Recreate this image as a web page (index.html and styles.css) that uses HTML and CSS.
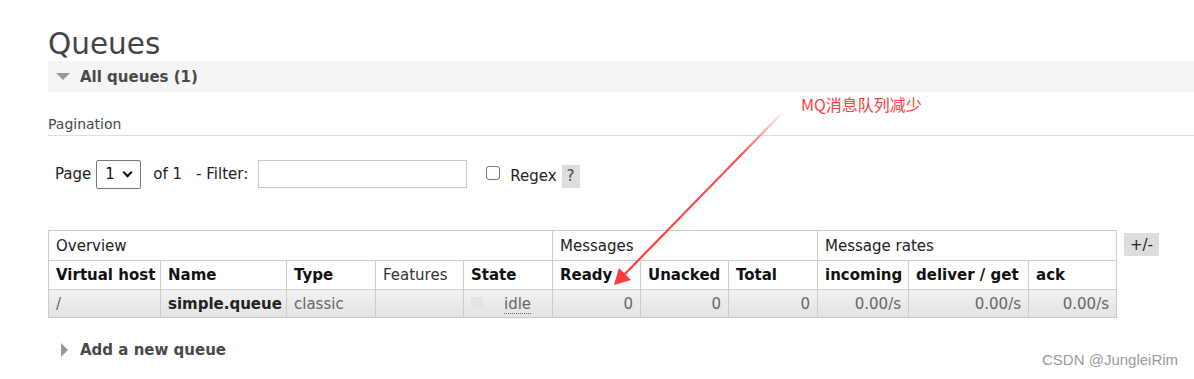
FILE: index.html
```html
<!DOCTYPE html>
<html>
<head>
    <title>Queues</title>
    <meta name="viewport" content="width=device-width, initial-scale=1.0">
    <link rel="stylesheet" href="styles.css">
</head>
<body>
    <div class="main">
        <h1>Queues</h1>

        <div class="section">
            <h2 class="section-title"><span class="tri-down"></span>All queues (1)</h2>

            <h3 class="pagination-title">Pagination</h3>

            <div class="filter-row">
                <label>Page</label>
                <div class="select-box">1 <span class="chevron"></span></div>
                <span class="of">of 1</span>
                <label>- Filter:</label>
                <span class="filter-input"></span>
                <span class="checkbox"></span>
                <label class="regex">Regex</label>
                <span class="help">?</span>
            </div>

            <div class="table-wrap">
                <table class="queues">
                    <colgroup>
                        <col style="width:112px"><col style="width:126px"><col style="width:89px">
                        <col style="width:88px"><col style="width:89px"><col style="width:88px">
                        <col style="width:88px"><col style="width:89px"><col style="width:91px">
                        <col style="width:120px"><col style="width:88px">
                    </colgroup>
                    <thead>
                        <tr class="group">
                            <th colspan="5">Overview</th>
                            <th colspan="3">Messages</th>
                            <th colspan="3">Message rates</th>
                        </tr>
                        <tr class="cols">
                            <th>Virtual host</th>
                            <th>Name</th>
                            <th>Type</th>
                            <th class="plain">Features</th>
                            <th>State</th>
                            <th>Ready</th>
                            <th>Unacked</th>
                            <th>Total</th>
                            <th>incoming</th>
                            <th>deliver / get</th>
                            <th>ack</th>
                        </tr>
                    </thead>
                    <tbody>
                        <tr>
                            <td>/</td>
                            <td class="name">simple.queue</td>
                            <td>classic</td>
                            <td></td>
                            <td class="state"><span class="status"></span><abbr>idle</abbr></td>
                            <td class="num">0</td>
                            <td class="num">0</td>
                            <td class="num">0</td>
                            <td class="num">0.00/s</td>
                            <td class="num">0.00/s</td>
                            <td class="num">0.00/s</td>
                        </tr>
                    </tbody>
                </table>
                <span class="toggle">+/-</span>
            </div>
        </div>

        <h2 class="section-title closed"><span class="tri-right"></span>Add a new queue</h2>
    </div>

    <!-- screenshot annotation -->
    <div class="note">MQ消息队列减少</div>
    <svg class="arrow" width="1194" height="379" viewBox="0 0 1194 379">
        <defs>
            <linearGradient id="fade" x1="785" y1="110" x2="615" y2="284" gradientUnits="userSpaceOnUse">
                <stop offset="0" stop-color="#ff3b3b" stop-opacity="0"/>
                <stop offset="0.25" stop-color="#ff3b3b" stop-opacity="0.9"/>
                <stop offset="1" stop-color="#ff3b3b"/>
            </linearGradient>
        </defs>
        <line x1="785" y1="110" x2="621" y2="278" stroke="url(#fade)" stroke-width="2.2"/>
        <polygon points="614,285 619,268 631,280" fill="#ff3b3b"/>
    </svg>
    <div class="watermark">CSDN @JungleiRim</div>
</body>
</html>
```

FILE: styles.css
```css
* {
    box-sizing: border-box;
    margin: 0;
    padding: 0;
}

body {
    font-family: 'DejaVu Sans', Verdana, sans-serif;
    font-size: 15px;
    color: #484848;
    background: #fff;
    overflow: hidden;
}

.main {
    padding: 27px 0 0 48px;
}

h1 {
    font-size: 29.5px;
    font-weight: normal;
    color: #444;
    line-height: 34px;
}

.section-title {
    display: flex;
    align-items: center;
    height: 31px;
    background: #f5f5f5;
    font-size: 15px;
    font-weight: bold;
    color: #484848;
    padding-left: 8px;
}

.section-title.closed {
    background: none;
    margin-top: 16px;
    padding-left: 13px;
}

.tri-down {
    width: 0;
    height: 0;
    border-left: 7px solid transparent;
    border-right: 7px solid transparent;
    border-top: 7px solid #999;
    margin-right: 10px;
}

.tri-right {
    width: 0;
    height: 0;
    border-top: 7px solid transparent;
    border-bottom: 7px solid transparent;
    border-left: 7px solid #999;
    margin-right: 12px;
}

.pagination-title {
    margin-top: 24px;
    font-size: 14px;
    font-weight: normal;
    color: #484848;
    padding-bottom: 3px;
    border-bottom: 1px solid #ddd;
}

.filter-row {
    display: flex;
    align-items: center;
    height: 30px;
    margin-top: 23px;
    padding-left: 7px;
    color: #222;
    font-size: 15px;
}

.select-box {
    display: flex;
    align-items: center;
    gap: 9px;
    width: 45px;
    height: 29px;
    margin-left: 5px;
    padding-left: 8px;
    border: 1px solid #767676;
    border-radius: 2px;
    font-size: 15px;
    color: #111;
}

.chevron {
    width: 7px;
    height: 7px;
    border-right: 2px solid #111;
    border-bottom: 2px solid #111;
    transform: translateY(-2px) rotate(45deg);
}

.of {
    margin-left: 12px;
    margin-right: 14px;
}

.filter-input {
    width: 209px;
    height: 28px;
    margin-left: 10px;
    border: 1px solid #c8c8c8;
}

.checkbox {
    width: 14px;
    height: 14px;
    margin-left: 19px;
    margin-top: -3px;
    border: 1px solid #767676;
    border-radius: 3px;
}

.regex {
    margin-left: 10px;
    margin-top: 4px;
}

.help {
    display: flex;
    align-items: center;
    justify-content: center;
    width: 18px;
    height: 23px;
    margin-left: 5px;
    margin-top: 4px;
    background: #ddd;
    color: #444;
}

.table-wrap {
    display: flex;
    align-items: flex-start;
    margin-top: 41px;
}

.queues {
    table-layout: fixed;
    width: 1068px;
    border-collapse: collapse;
}

.queues th,
.queues td {
    border: 1px solid #ccc;
    height: 29px;
    padding: 0 7px;
    text-align: left;
    white-space: nowrap;
    overflow: hidden;
}

.queues .group th {
    height: 30px;
    font-weight: normal;
    color: #222;
    font-size: 15px;
}

.queues .cols th {
    font-weight: bold;
    color: #111;
}

.queues .cols th.plain {
    font-weight: normal;
    color: #333;
    font-size: 15px;
}

.queues tbody tr {
    background: linear-gradient(#f2f2f2, #e2e2e2);
}

.queues td {
    height: 28px;
    color: #666;
}

.queues td.name {
    font-weight: bold;
    color: #222;
}

.queues td.num {
    text-align: right;
}

.queues td.state {
    color: #666;
}

.status {
    display: inline-block;
    width: 12px;
    height: 12px;
    background: #e4e4e4;
    vertical-align: middle;
    margin-right: 21px;
    margin-top: -3px;
}

abbr {
    text-decoration: none;
    border-bottom: 1px dotted #666;
}

.toggle {
    margin-left: 7px;
    margin-top: 3px;
    width: 35px;
    height: 23px;
    display: flex;
    align-items: center;
    justify-content: center;
    background: #ddd;
    color: #222;
    font-size: 15px;
}

.note {
    position: absolute;
    left: 801px;
    top: 94px;
    font-family: 'Noto Sans CJK SC', sans-serif;
    font-size: 16px;
    line-height: 20px;
    color: #ff3b3b;
}

.arrow {
    position: absolute;
    left: 0;
    top: 0;
    pointer-events: none;
}

.watermark {
    position: absolute;
    left: 1042px;
    top: 351px;
    font-family: 'Liberation Sans', sans-serif;
    font-size: 15px;
    color: #9a9a9a;
}
```
